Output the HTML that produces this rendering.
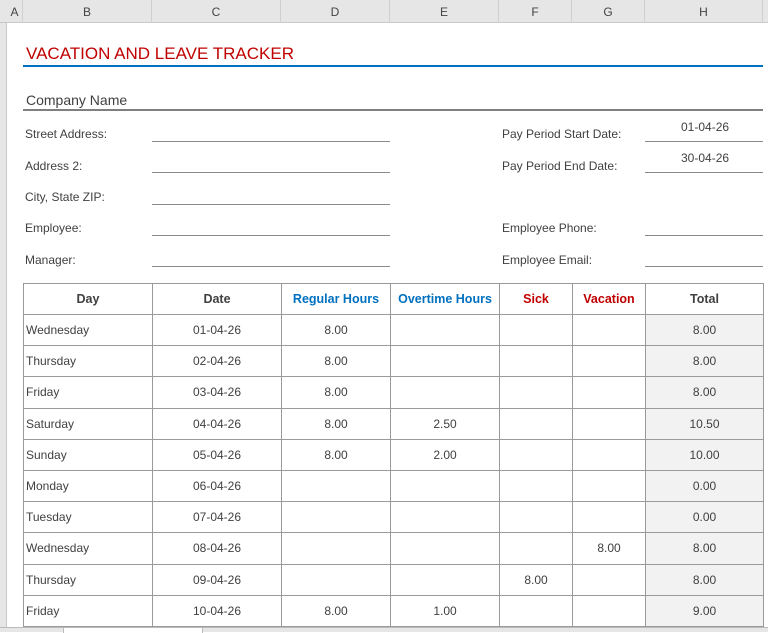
<!DOCTYPE html>
<html><head><style>
*{margin:0;padding:0;box-sizing:border-box}
body{width:768px;height:632px;overflow:hidden;background:#fff;font-family:"Liberation Sans",sans-serif;color:#404040;position:relative}
.hdr{position:absolute;top:0;left:0;width:768px;height:23px;background:#e6e6e6;border-bottom:1px solid #c8c8c8}
.hdr span{position:absolute;top:0;height:23px;line-height:24px;text-align:center;font-size:12px;color:#444;border-right:1px solid #cfcfcf}
.lcol{position:absolute;top:23px;left:0;width:7px;height:609px;background:#e6e6e6;border-right:1px solid #c8c8c8}
.t{position:absolute;font-size:12px;white-space:nowrap}
.ln{position:absolute;height:1px;background:#8a8a8a}
table{position:absolute;left:23px;top:283px;border-collapse:collapse;font-size:12px;table-layout:fixed}
td{border:1px solid #9a9a9a;height:31.2px;text-align:center;padding:0;color:#404040}
td.l{text-align:left;padding-left:2px}
td.h{background:#f2f2f2}
tr.th td{height:31px;font-weight:bold;font-size:12.5px}
.bl{color:#0070c0}.rd{color:#c00000}
.tabs{position:absolute;left:0;top:627px;width:768px;height:5px;background:#e6e6e6;border-top:1px solid #bbb}
</style></head><body>
<div class="hdr">
<span style="left:7px;width:16px">A</span>
<span style="left:23px;width:129px">B</span>
<span style="left:152px;width:129px">C</span>
<span style="left:281px;width:109px">D</span>
<span style="left:390px;width:109px">E</span>
<span style="left:499px;width:73px">F</span>
<span style="left:572px;width:73px">G</span>
<span style="left:645px;width:118px">H</span>
</div>
<div class="lcol"></div>
<div class="t" style="left:26px;top:44px;font-size:17px;color:#c00000">VACATION AND LEAVE TRACKER</div>
<div style="position:absolute;left:23px;top:65px;width:740px;height:2px;background:#0070c0"></div>
<div class="t" style="left:26px;top:92px;font-size:14px;color:#404040">Company Name</div>
<div style="position:absolute;left:23px;top:109px;width:740px;height:2px;background:#7f7f7f"></div>
<div class="t" style="left:25px;top:127px">Street Address:</div>
<div class="t" style="left:25px;top:159px">Address 2:</div>
<div class="t" style="left:25px;top:190px">City, State ZIP:</div>
<div class="t" style="left:25px;top:221px">Employee:</div>
<div class="t" style="left:25px;top:253px">Manager:</div>
<div class="ln" style="left:152px;top:141px;width:238px"></div>
<div class="ln" style="left:152px;top:172px;width:238px"></div>
<div class="ln" style="left:152px;top:204px;width:238px"></div>
<div class="ln" style="left:152px;top:235px;width:238px"></div>
<div class="ln" style="left:152px;top:266px;width:238px"></div>
<div class="t" style="left:502px;top:127px">Pay Period Start Date:</div>
<div class="t" style="left:502px;top:159px">Pay Period End Date:</div>
<div class="t" style="left:502px;top:221px">Employee Phone:</div>
<div class="t" style="left:502px;top:253px">Employee Email:</div>
<div class="t" style="left:681px;top:120px">01-04-26</div>
<div class="t" style="left:681px;top:151px">30-04-26</div>
<div class="ln" style="left:645px;top:141px;width:118px"></div>
<div class="ln" style="left:645px;top:172px;width:118px"></div>
<div class="ln" style="left:645px;top:235px;width:118px"></div>
<div class="ln" style="left:645px;top:266px;width:118px"></div>
<table>
<colgroup><col style="width:129px"><col style="width:129px"><col style="width:109px"><col style="width:109px"><col style="width:73px"><col style="width:73px"><col style="width:118px"></colgroup>
<tr class="th"><td>Day</td><td>Date</td><td class="bl">Regular Hours</td><td class="bl">Overtime Hours</td><td class="rd">Sick</td><td class="rd">Vacation</td><td>Total</td></tr>
<tr><td class="l">Wednesday</td><td>01-04-26</td><td>8.00</td><td></td><td></td><td></td><td class="h">8.00</td></tr>
<tr><td class="l">Thursday</td><td>02-04-26</td><td>8.00</td><td></td><td></td><td></td><td class="h">8.00</td></tr>
<tr><td class="l">Friday</td><td>03-04-26</td><td>8.00</td><td></td><td></td><td></td><td class="h">8.00</td></tr>
<tr><td class="l">Saturday</td><td>04-04-26</td><td>8.00</td><td>2.50</td><td></td><td></td><td class="h">10.50</td></tr>
<tr><td class="l">Sunday</td><td>05-04-26</td><td>8.00</td><td>2.00</td><td></td><td></td><td class="h">10.00</td></tr>
<tr><td class="l">Monday</td><td>06-04-26</td><td></td><td></td><td></td><td></td><td class="h">0.00</td></tr>
<tr><td class="l">Tuesday</td><td>07-04-26</td><td></td><td></td><td></td><td></td><td class="h">0.00</td></tr>
<tr><td class="l">Wednesday</td><td>08-04-26</td><td></td><td></td><td></td><td>8.00</td><td class="h">8.00</td></tr>
<tr><td class="l">Thursday</td><td>09-04-26</td><td></td><td></td><td>8.00</td><td></td><td class="h">8.00</td></tr>
<tr><td class="l">Friday</td><td>10-04-26</td><td>8.00</td><td>1.00</td><td></td><td></td><td class="h">9.00</td></tr>
</table>
<div class="tabs"><div style="position:absolute;left:63px;top:-1px;width:140px;height:6px;background:#fff;border:1px solid #bbb;border-bottom:none"></div></div>
</body></html>
